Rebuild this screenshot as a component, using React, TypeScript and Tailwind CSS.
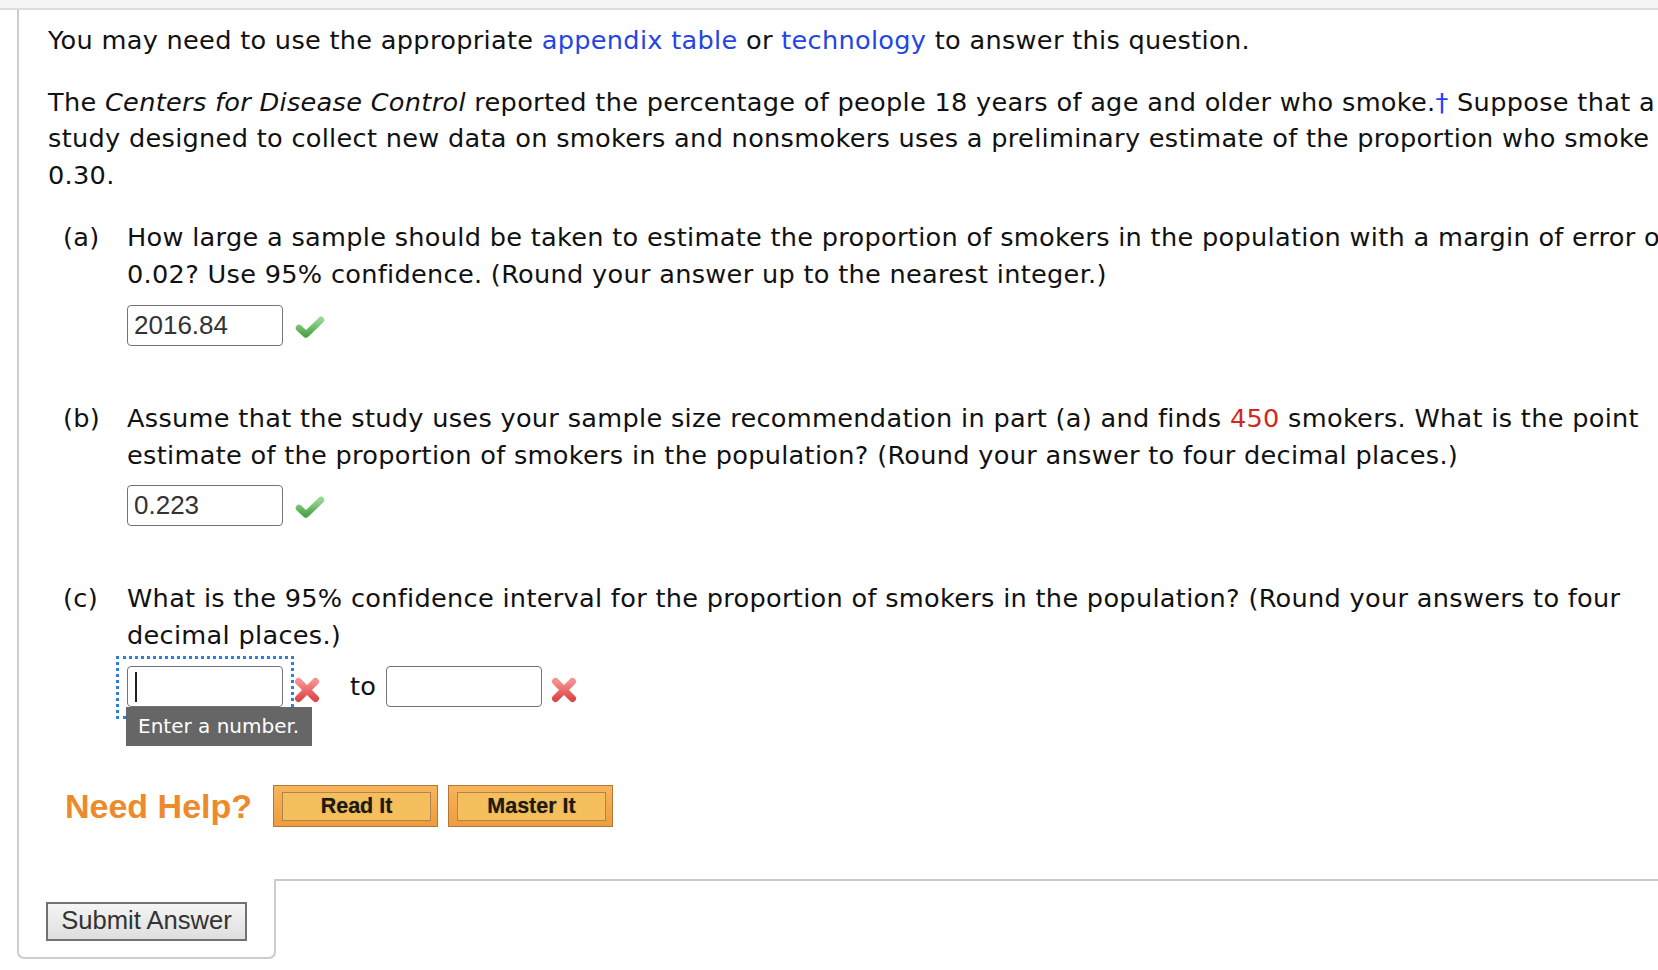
import React from 'react';

const Check = () => (
  <svg width="32" height="24" viewBox="0 0 32 24" className="ml-[11px] mt-[2px]">
    <defs>
      <linearGradient id="gck" x1="0" y1="0" x2="0" y2="1">
        <stop offset="0" stopColor="#95d690" />
        <stop offset="1" stopColor="#4ea64b" />
      </linearGradient>
    </defs>
    <polyline points="5,13 12,19.5 27,5" fill="none" stroke="url(#gck)" strokeWidth="6.5" strokeLinecap="round" strokeLinejoin="round" />
  </svg>
);

const Cross = () => (
  <svg width="28" height="28" viewBox="0 0 28 28" className="mt-[6px]">
    <defs>
      <linearGradient id="gx" x1="0" y1="0" x2="0" y2="1">
        <stop offset="0" stopColor="#f59090" />
        <stop offset="1" stopColor="#de4a4a" />
      </linearGradient>
    </defs>
    <line x1="5.5" y1="5.5" x2="22.5" y2="22.5" stroke="url(#gx)" strokeWidth="7" strokeLinecap="round" />
    <line x1="22.5" y1="5.5" x2="5.5" y2="22.5" stroke="url(#gx)" strokeWidth="7" strokeLinecap="round" />
  </svg>
);

const AnswerBox = ({ value, children }: { value?: string; children?: React.ReactNode }) => (
  <div className="relative w-[156px] h-[41px] border-[1.5px] border-[#747474] rounded-[4px] bg-white flex items-center pl-[6px] text-[26px] tracking-normal text-[#333] font-['Liberation_Sans',Arial,sans-serif]">
    {value}
    {children}
  </div>
);

const HelpButton = ({ label }: { label: string }) => (
  <button className="w-[165px] h-[42px] border-[1.5px] border-[#b27838] bg-gradient-to-b from-[#f8b45c] to-[#ee9c3e] pl-[8px] pr-[6px] py-[5.5px] flex">
    <span className="flex-1 h-full border-[1.5px] border-[#b0844c] bg-[#f4bf5c] flex items-center justify-center text-[21.5px] tracking-normal font-bold text-[#1e1a12] font-['Liberation_Sans',Arial,sans-serif] [text-shadow:0_0_1px_rgba(0,0,0,0.4)]">
      {label}
    </span>
  </button>
);

const Part = ({ label, children }: { label: string; children: React.ReactNode }) => (
  <div className="flex ml-[15px]">
    <div className="w-[64px] shrink-0">{label}</div>
    <div>{children}</div>
  </div>
);

export default function App() {
  return (
    <div className="w-[1658px] h-[970px] overflow-hidden bg-white text-[#111] font-['DejaVu_Sans',Verdana,sans-serif] text-[25.6px] tracking-[0.3px] leading-[36.5px]">
      <div className="h-[10px] bg-[#f5f5f5] border-b-2 border-[#dcdcdc]" />
      <div className="ml-[17px]">
        <div className="border-l-2 border-[#cccccc] pl-[29px] pt-[12px] h-[869px] whitespace-nowrap">
          <p>
            You may need to use the appropriate <span className="text-[#2445e4]">appendix table</span> or{' '}
            <span className="text-[#2445e4]">technology</span> to answer this question.
          </p>

          <p className="mt-[25px]">
            The <i>Centers for Disease Control</i> reported the percentage of people 18 years of age and older who smoke.
            <span className="text-[#1f3cff]">†</span> Suppose that a
            <br />
            study designed to collect new data on smokers and nonsmokers uses a preliminary estimate of the proportion who smoke of
            <br />
            0.30.
          </p>

          <div className="mt-[26px]">
            <Part label="(a)">
              How large a sample should be taken to estimate the proportion of smokers in the population with a margin of error of
              <br />
              0.02? Use 95% confidence. (Round your answer up to the nearest integer.)
              <div className="flex items-center mt-[13px]">
                <AnswerBox value="2016.84" />
                <Check />
              </div>
            </Part>
          </div>

          <div className="mt-[54px]">
            <Part label="(b)">
              Assume that the study uses your sample size recommendation in part (a) and finds{' '}
              <span className="text-[#d2281f]">450</span> smokers. What is the point
              <br />
              estimate of the proportion of smokers in the population? (Round your answer to four decimal places.)
              <div className="flex items-center mt-[12px]">
                <AnswerBox value="0.223" />
                <Check />
              </div>
            </Part>
          </div>

          <div className="mt-[54px]">
            <Part label="(c)">
              What is the 95% confidence interval for the proportion of smokers in the population? (Round your answers to four
              <br />
              decimal places.)
              <div className="flex items-center mt-[13px]">
                <div className="relative">
                  <div className="absolute left-[-11px] top-[-10px] w-[178px] h-[63px] border-[3px] border-dotted border-[#2b7fe3]" />
                  <AnswerBox>
                    <span className="w-[2px] h-[30px] bg-[#222] ml-[1px]" />
                  </AnswerBox>
                  <div className="absolute left-[-1px] top-[41px] w-[186px] h-[39px] bg-[#666666] text-white text-[20px] tracking-normal leading-[39px] pl-[12px] z-10">
                    Enter a number.
                  </div>
                </div>
                <div className="ml-[10px]">
                  <Cross />
                </div>
                <span className="ml-[29px] mr-[10px]">to</span>
                <AnswerBox />
                <div className="ml-[8px]">
                  <Cross />
                </div>
              </div>
            </Part>
          </div>

          <div className="flex items-center mt-[78px] ml-[17px]">
            <span className="w-[208px] text-[34px] tracking-normal font-bold text-[#ec8a2c] font-['Liberation_Sans',Arial,sans-serif]">
              Need Help?
            </span>
            <HelpButton label="Read It" />
            <div className="ml-[10px]">
              <HelpButton label="Master It" />
            </div>
          </div>
        </div>

        <div className="flex">
          <div className="w-[259px] h-[80px] border-l-2 border-r-2 border-b-2 border-[#cccccc] rounded-b-[7px] flex items-center pl-[27px] pt-[6px]">
            <button className="w-[201px] h-[39px] border-2 border-[#727272] bg-gradient-to-b from-[#f5f5f5] to-[#dedede] text-[25.6px] tracking-normal text-[#333] font-['Liberation_Sans',Arial,sans-serif] leading-none">
              Submit Answer
            </button>
          </div>
          <div className="flex-1 border-t-2 border-[#cccccc]" />
        </div>
      </div>
    </div>
  );
}
